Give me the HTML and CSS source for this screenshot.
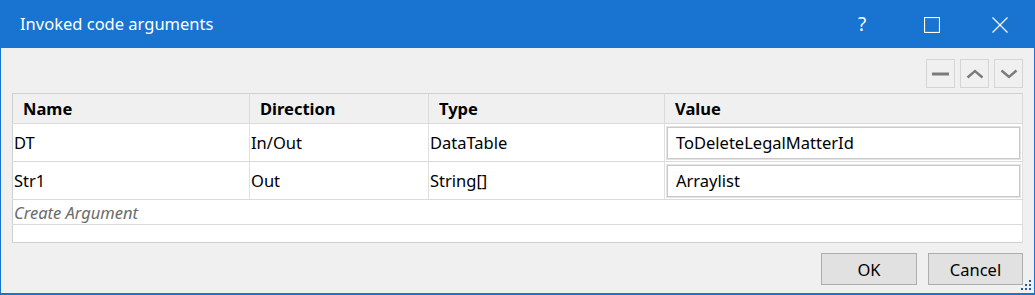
FILE: index.html
```html
<!DOCTYPE html>
<html lang="en">
<head>
    <meta charset="UTF-8">
    <title>Invoked code arguments</title>
    <link rel="stylesheet" href="styles.css">
</head>
<body>
    <div class="window">
        <div class="titlebar">
            <span class="title">Invoked code arguments</span>
            <div class="title-buttons">
                <span class="tb-btn help">?</span>
                <span class="tb-btn">
                    <svg width="16" height="16" viewBox="0 0 16 16"><rect x="0.5" y="0.5" width="15" height="15" fill="none" stroke="#fff" stroke-width="1.2"/></svg>
                </span>
                <span class="tb-btn">
                    <svg width="16" height="16" viewBox="0 0 16 16"><path d="M0.5 0.5 L15.5 15.5 M15.5 0.5 L0.5 15.5" stroke="#fff" stroke-width="1.2"/></svg>
                </span>
            </div>
        </div>

        <div class="content">
            <div class="toolbar">
                <button class="tool">
                    <svg width="17" height="4" viewBox="0 0 17 4"><rect x="0" y="0.5" width="17" height="3" fill="#7b7b7b"/></svg>
                </button>
                <button class="tool">
                    <svg width="18" height="10" viewBox="0 0 18 10"><path d="M1.5 8.5 L9 2 L16.5 8.5" fill="none" stroke="#7b7b7b" stroke-width="2.4"/></svg>
                </button>
                <button class="tool">
                    <svg width="18" height="10" viewBox="0 0 18 10"><path d="M1.5 1.5 L9 8 L16.5 1.5" fill="none" stroke="#7b7b7b" stroke-width="2.4"/></svg>
                </button>
            </div>

            <table class="grid">
                <colgroup>
                    <col class="c-name">
                    <col class="c-dir">
                    <col class="c-type">
                    <col class="c-value">
                </colgroup>
                <thead>
                    <tr>
                        <th>Name</th>
                        <th>Direction</th>
                        <th>Type</th>
                        <th>Value</th>
                    </tr>
                </thead>
                <tbody>
                    <tr class="arg-row">
                        <td>DT</td>
                        <td>In/Out</td>
                        <td>DataTable</td>
                        <td class="value-cell"><div class="value-box">ToDeleteLegalMatterId</div></td>
                    </tr>
                    <tr class="arg-row">
                        <td>Str1</td>
                        <td>Out</td>
                        <td>String[]</td>
                        <td class="value-cell"><div class="value-box">Arraylist</div></td>
                    </tr>
                    <tr class="create-row">
                        <td colspan="4">Create Argument</td>
                    </tr>
                    <tr class="empty-row">
                        <td colspan="4"></td>
                    </tr>
                </tbody>
            </table>

            <div class="footer">
                <button class="btn">OK</button>
                <button class="btn">Cancel</button>
            </div>

            <svg class="grip" width="12" height="12" viewBox="0 0 12 12">
                <rect x="8" y="0" width="2" height="2" fill="#1f5fa8"/>
                <rect x="4" y="4" width="2" height="2" fill="#1f5fa8"/>
                <rect x="8" y="4" width="2" height="2" fill="#1f5fa8"/>
                <rect x="0" y="8" width="2" height="2" fill="#1f5fa8"/>
                <rect x="4" y="8" width="2" height="2" fill="#1f5fa8"/>
                <rect x="8" y="8" width="2" height="2" fill="#1f5fa8"/>
            </svg>
        </div>
    </div>
</body>
</html>
```

FILE: styles.css
```css
body {
    margin: 0;
    font-family: 'Noto Sans', 'Liberation Sans', sans-serif;
    font-size: 16.5px;
    color: #000;
    background: #fff;
}
.window {
    width: 1035px;
    height: 295px;
    box-sizing: border-box;
    border: 1px solid #1874d0;
    border-bottom-width: 2px;
    display: flex;
    flex-direction: column;
    background: #f0f0f0;
}
.titlebar {
    height: 47px;
    background: #1874d0;
    color: #fff;
    display: flex;
    align-items: center;
    justify-content: space-between;
    padding-left: 19px;
}
.title {
    font-size: 16.5px;
    margin-top: -2px;
}
.title-buttons {
    display: flex;
    align-items: center;
    height: 100%;
}
.tb-btn {
    width: 68px;
    height: 100%;
    display: flex;
    align-items: center;
    justify-content: center;
}
.tb-btn.help {
    font-size: 19px;
    width: 60px;
    margin-top: -2px;
    margin-right: 6px;
}
.content {
    flex: 1;
    position: relative;
    padding: 11px 11px 0 11px;
}
.toolbar {
    display: flex;
    justify-content: flex-end;
    gap: 5px;
    margin-bottom: 5px;
}
.tool {
    width: 29px;
    height: 29px;
    padding: 0;
    border: 1px solid #d5d5d5;
    background: #f0f0f0;
    display: flex;
    align-items: center;
    justify-content: center;
}
.grid {
    width: 1011px;
    border-collapse: collapse;
    table-layout: fixed;
    border: 1px solid #d0d0d0;
    font-size: 16.5px;
}
.c-name { width: 237px; }
.c-dir { width: 179px; }
.c-type { width: 236px; }
.c-value { width: 358px; }
.grid th {
    height: 29px;
    text-align: left;
    font-weight: bold;
    padding: 0 0 0 10px;
    background: #f0f0f0;
    border-right: 1px solid #dadada;
    border-bottom: 1px solid #dadada;
}
.grid td {
    background: #fff;
    padding: 0 0 0 1px;
    border-right: 1px solid #e0e0e0;
    border-bottom: 1px solid #dadada;
}
.arg-row td {
    height: 37px;
}
.grid td.value-cell {
    padding: 0;
}
.value-box {
    box-sizing: border-box;
    height: 32px;
    border: 1px solid #c9c9c9;
    box-shadow: 0 0 0 1px #e4e4e4;
    margin: 2px;
    padding-left: 8px;
    line-height: 30px;
    background: #fff;
}
.create-row td {
    height: 24px;
    font-style: italic;
    color: #6b6b6b;
}
.empty-row td {
    height: 17px;
    border-bottom: none;
}
.footer {
    display: flex;
    justify-content: flex-end;
    gap: 11px;
    margin-top: 10px;
}
.btn {
    height: 32px;
    width: 96px;
    font-family: inherit;
    font-size: 16.5px;
    background: #e1e1e1;
    border: 1px solid #adadad;
    padding: 0;
}
.btn + .btn {
    width: 95px;
}
.grip {
    position: absolute;
    right: 1px;
    bottom: 1px;
}
```
